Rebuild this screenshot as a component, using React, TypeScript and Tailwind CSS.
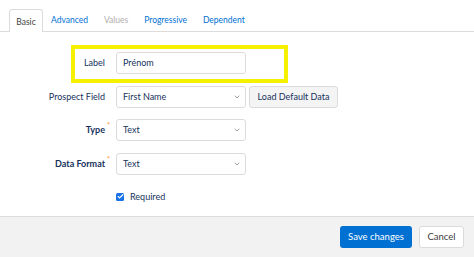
import React from 'react';
import { ChevronDown, Check } from 'lucide-react';

const font = { fontFamily: 'Lato, "Open Sans", Arial, sans-serif' };

const Select = ({ value }: { value: string }) => (
  <div className="w-[130px] h-[22px] flex items-center justify-between pl-[6px] pr-[4px] border border-[#dddbda] rounded-[3px] bg-white text-[9px] text-[#16325c]">
    <span>{value}</span>
    <ChevronDown size={8} className="text-[#706e6b]" strokeWidth={2} />
  </div>
);

const Row = ({ label, bold, req, children }: { label: string; bold?: boolean; req?: boolean; children: React.ReactNode }) => (
  <div className="flex items-center h-[22px]">
    <div className="w-[116px] shrink-0 flex justify-end pr-[11px]">
      <span className={`relative text-[9px] text-[#16325c] ${bold ? 'font-bold' : ''}`}>
        {label}
        {req && <span className="absolute -right-[5px] -top-[3px] text-[7px] text-[#ff9a3c]">*</span>}
      </span>
    </div>
    {children}
  </div>
);

export default function App() {
  const tabs = [
    { name: 'Advanced', cls: 'text-[#0070d2]' },
    { name: 'Values', cls: 'text-[#b0adab]' },
    { name: 'Progressive', cls: 'text-[#0070d2]' },
    { name: 'Dependent', cls: 'text-[#0070d2]' },
  ];
  return (
    <div className="w-[474px] h-[257px] bg-white flex flex-col overflow-hidden" style={font}>
      <div className="pt-[9px] pl-[9px] flex items-end border-b border-[#dddbda] h-[32px]">
        <div className="h-[23px] w-[34px] pt-[2px] flex items-center justify-center border border-b-0 border-[#dddbda] rounded-t-[3px] bg-white -mb-px text-[8.5px] text-[#3e3e3c]">
          Basic
        </div>
        {tabs.map((t) => (
          <div key={t.name} className={`h-[23px] pt-[2px] px-[8px] flex items-center text-[8.5px] ${t.cls}`}>
            {t.name}
          </div>
        ))}
      </div>

      <div className="flex-1 flex flex-col pt-[20px]">
        <div className="relative">
          <div className="absolute left-[71px] top-[-7px] w-[217px] h-[38px] border-[4px] border-[#f5ef00]" />
          <Row label="Label">
            <div className="w-[130px] h-[22px] flex items-center pl-[6px] border border-[#dddbda] rounded-[3px] bg-white text-[9px] text-[#16325c]">
              Prénom
            </div>
          </Row>
        </div>
        <div className="mt-[12px]">
          <Row label="Prospect Field">
            <Select value="First Name" />
            <div className="ml-[3px] h-[22px] w-[89px] flex items-center justify-center border border-[#dddbda] rounded-[3px] bg-[#f4f4f4] text-[9px] text-[#16325c]">
              Load Default Data
            </div>
          </Row>
        </div>
        <div className="mt-[11px]">
          <Row label="Type" bold req>
            <Select value="Text" />
          </Row>
        </div>
        <div className="mt-[12px]">
          <Row label="Data Format" bold req>
            <Select value="Text" />
          </Row>
        </div>
        <div className="flex items-center pl-[116px] mt-[15px] gap-[6px]">
          <div className="w-[8px] h-[8px] rounded-[1.5px] bg-[#1a73e8] flex items-center justify-center">
            <Check size={7} strokeWidth={4} className="text-white" />
          </div>
          <span className="text-[9px] text-[#16325c]">Required</span>
        </div>
      </div>

      <div className="h-[41px] shrink-0 bg-[#f3f2f2] border-t border-[#dddbda] flex items-center justify-end pr-[10px]">
        <div className="h-[22px] w-[72px] flex items-center justify-center rounded-[3px] bg-[#0070d2] text-white text-[9.5px]">
          Save changes
        </div>
        <div className="ml-[7px] h-[22px] w-[45px] flex items-center justify-center rounded-[3px] bg-white border border-[#dddbda] text-[9.5px] text-[#3e3e3c]">
          Cancel
        </div>
      </div>
    </div>
  );
}
